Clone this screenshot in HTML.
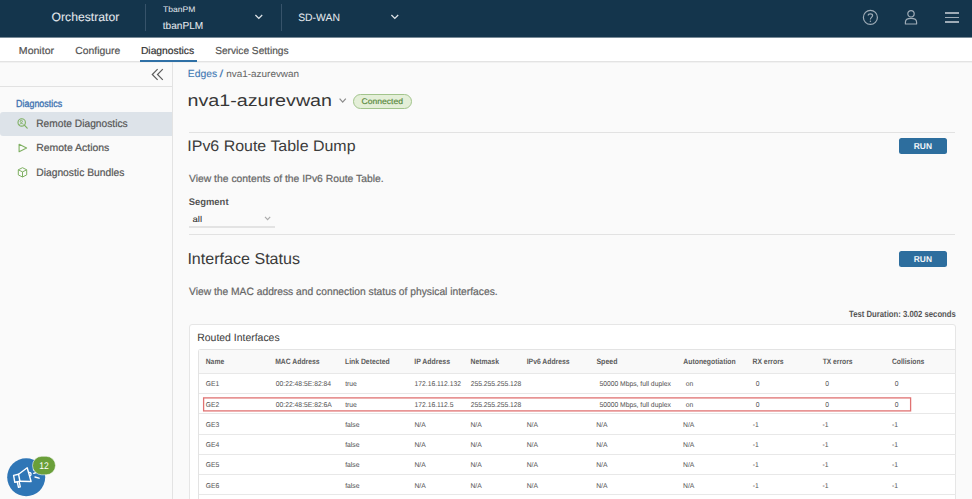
<!DOCTYPE html>
<html><head><meta charset="utf-8">
<style>
*{margin:0;padding:0;box-sizing:border-box}
html,body{width:972px;height:499px;overflow:hidden;background:#fafafa;font-family:"Liberation Sans",sans-serif;position:relative}
.a{position:absolute}
.t{position:absolute;white-space:nowrap;line-height:1;transform-origin:0 0;text-rendering:geometricPrecision;-webkit-text-stroke:0.2px currentColor}
.hr{position:absolute;height:1px;background:#e2e2e2}
.btn{position:absolute;width:48.3px;height:16.4px;background:#2d6e9e;border-radius:2.5px}
.rl{position:absolute;left:199px;width:757px;height:1px;background:#e8e8e8}
</style></head><body>
<div class="a" style="left:0;top:0;width:972px;height:37px;background:#14354c"></div>
<div class="a" style="left:145px;top:4px;width:1px;height:27px;background:#37536a"></div>
<svg class="a" style="left:254px;top:13px" width="10" height="8"><path d="M1.4 2 L4.8 5.4 L8.2 2" stroke="#dfe4e8" stroke-width="1.3" fill="none"/></svg>
<div class="a" style="left:281px;top:4px;width:1px;height:27px;background:#37536a"></div>
<svg class="a" style="left:390px;top:13px" width="10" height="8"><path d="M1.4 2 L4.8 5.4 L8.2 2" stroke="#dfe4e8" stroke-width="1.3" fill="none"/></svg>
<svg class="a" style="left:862px;top:9px" width="17" height="17"><circle cx="8.4" cy="8.4" r="7" stroke="#9eabb6" stroke-width="1.2" fill="none"/><path d="M6.2 6.6 C6.2 4.2 10.6 4.2 10.6 6.6 C10.6 8.3 8.4 8.4 8.4 10.4" stroke="#9eabb6" stroke-width="1.2" fill="none"/><circle cx="8.4" cy="12.3" r="0.7" fill="#9eabb6"/></svg>
<svg class="a" style="left:903px;top:9px" width="16" height="17"><circle cx="8" cy="4.8" r="3.2" stroke="#9eabb6" stroke-width="1.2" fill="none"/><path d="M2.4 15 L2.4 13.2 C2.4 10.4 5 9.4 8 9.4 C11 9.4 13.6 10.4 13.6 13.2 L13.6 15 Z" stroke="#9eabb6" stroke-width="1.2" fill="none" stroke-linejoin="round"/></svg>
<div class="a" style="left:945px;top:12px;width:13.5px;height:1.5px;background:#9eabb6"></div>
<div class="a" style="left:945px;top:16.5px;width:13.5px;height:1.5px;background:#9eabb6"></div>
<div class="a" style="left:945px;top:21px;width:13.5px;height:1.5px;background:#9eabb6"></div>

<div class="a" style="left:0;top:37px;width:972px;height:24px;background:#fff"></div>
<div class="a" style="left:0;top:61px;width:972px;height:1px;background:#e3e3e3"></div>
<div class="a" style="left:0;top:62px;width:972px;height:1px;background:#f1f1f1"></div>
<div class="a" style="left:0;top:37px;width:972px;height:1px;background:#788a97"></div>
<div class="a" style="left:139.5px;top:59.5px;width:57px;height:2px;background:#2f70a6"></div>

<div class="a" style="left:172px;top:62px;width:1px;height:437px;background:#e3e3e3"></div>
<svg class="a" style="left:151px;top:68px" width="14" height="13"><path d="M6.6 1.2 L1.3 6.5 L6.6 11.8 M11.8 1.2 L6.5 6.5 L11.8 11.8" stroke="#5c5c5c" stroke-width="1.2" fill="none"/></svg>
<div class="hr" style="left:0;top:86px;width:172px"></div>
<div class="a" style="left:0;top:111.5px;width:172px;height:24px;background:#dde3e9;border-radius:3px 0 0 3px"></div>
<svg class="a" style="left:16px;top:116px" width="14" height="14"><circle cx="5.7" cy="6.4" r="3.7" stroke="#7fb062" stroke-width="1.1" fill="none"/><circle cx="5.3" cy="5.4" r="1.1" stroke="#7fb062" stroke-width="0.9" fill="none"/><path d="M3.4 8.6 C4.2 7.2 6.6 7.2 7.6 8.4" stroke="#7fb062" stroke-width="0.9" fill="none"/><path d="M8.6 9.4 L11.2 12.1" stroke="#7fb062" stroke-width="1.2" stroke-linecap="round" fill="none"/></svg>
<svg class="a" style="left:18px;top:143px" width="10" height="10"><path d="M1.1 1.2 L8.6 5 L1.1 8.8 Z" stroke="#7fb062" stroke-width="1.1" fill="none" stroke-linejoin="round"/></svg>
<svg class="a" style="left:17px;top:167px" width="12" height="12"><path d="M5.5 0.7 L9.7 2.8 L9.7 7.9 L5.5 10 L1.3 7.9 L1.3 2.8 Z M1.3 2.8 L5.5 4.9 L9.7 2.8 M5.5 4.9 L5.5 10" stroke="#7fb062" stroke-width="1" fill="none" stroke-linejoin="round"/></svg>

<svg class="a" style="left:338px;top:97px" width="10" height="8"><path d="M1.6 1.6 L4.7 5.1 L7.8 1.6" stroke="#8a8a8a" stroke-width="1.2" fill="none"/></svg>
<div class="a" style="left:353px;top:94px;width:59px;height:15px;border:1px solid #a2c48c;background:#e4efd8;border-radius:8px"></div>

<div class="hr" style="left:189px;top:132px;width:766px"></div>
<div class="btn" style="left:899px;top:137.5px"></div>
<svg class="a" style="left:264px;top:215px" width="8" height="7"><path d="M1 1.8 L3.6 4.7 L6.2 1.8" stroke="#ababab" stroke-width="1.15" fill="none"/></svg>
<div class="a" style="left:189px;top:226px;width:86px;height:2px;background:#e3e3e3"></div>
<div class="hr" style="left:189px;top:233.5px;width:766px"></div>
<div class="btn" style="left:899px;top:250.5px"></div>

<div class="a" style="left:189px;top:324px;width:767px;height:200px;background:#fff;border:1px solid #e6e6e6;border-radius:3px"></div>
<div class="a" style="left:198px;top:349px;width:757px;height:160px;background:#fff;border:1px solid #e3e3e3;border-right:0;border-radius:3px 0 0 0"></div>
<div class="a" style="left:199px;top:350px;width:756px;height:23px;background:#f9f9f9"></div>
<div class="a" style="left:955px;top:330px;width:1px;height:169px;background:#e6e6e6"></div>
<div class="rl" style="top:373px"></div>
<div class="rl" style="top:393px"></div>
<div class="rl" style="top:413px"></div>
<div class="rl" style="top:433.5px"></div>
<div class="rl" style="top:454px"></div>
<div class="rl" style="top:474px"></div>
<div class="rl" style="top:494px"></div>
<svg class="a" style="left:200px;top:394px" width="715" height="20"><rect x="3.6" y="3.9" width="707" height="13" fill="none" stroke="#e07272" stroke-width="1.3"/></svg>

<svg class="a" style="left:0;top:450px" width="60" height="49">
<circle cx="26.2" cy="27.2" r="19" fill="#2f76b6"/>
<g fill="none" stroke="#fff" stroke-width="1.4" stroke-linejoin="round" stroke-linecap="round">
<path d="M13.6 25.4 L18.6 24.3 L19.9 31.2 L14.8 32.3 Z"/>
<path d="M18.6 24.3 L27.2 17.8 L31.1 31.5 L19.9 31.2"/>
<path d="M29.2 22.6 C31 22 31.8 25.2 30.1 25.8"/>
<path d="M17.3 32.1 L18.5 37.3 L20.3 36.9 L19.2 31.8"/>
<path d="M33.8 23.4 L36.2 22.5 M35 27 L39 28.2 M33.5 19.8 L34.5 20.2"/>
</g>
<rect x="32.5" y="6.3" width="23" height="18.5" rx="9.25" fill="#6a9f3a" stroke="#f4f7f4" stroke-width="0.6"/>
</svg>
<div class="t" style="left:51px;top:11px;font-size:12.06px;color:#e4e9ee;-webkit-text-stroke:0.05px currentColor;transform:translateX(0.492px) scaleX(1.0125);">Orchestrator</div>
<div class="t" style="left:163px;top:6px;font-size:8.09px;color:#e4e9ee;-webkit-text-stroke:0.02px currentColor;transform:translateX(0.056px) scaleX(1.0548);">TbanPM</div>
<div class="t" style="left:162px;top:22px;font-size:10.15px;color:#e4e9ee;-webkit-text-stroke:0.05px currentColor;transform:translateX(0.760px) scaleX(0.9981);">tbanPLM</div>
<div class="t" style="left:298px;top:13px;font-size:10.59px;color:#e4e9ee;-webkit-text-stroke:0.05px currentColor;transform:translateX(0.203px) scaleX(0.9802);">SD-WAN</div>
<div class="t" style="left:18px;top:47px;font-size:10.15px;color:#555;transform:translateX(0.839px) scaleX(1.0426);">Monitor</div>
<div class="t" style="left:75px;top:47px;font-size:10.15px;color:#555;transform:translateX(0.298px) scaleX(1.0240);">Configure</div>
<div class="t" style="left:140px;top:47px;font-size:10.15px;color:#333;transform:translateX(0.913px) scaleX(1.0176);">Diagnostics</div>
<div class="t" style="left:215px;top:47px;font-size:10.15px;color:#555;transform:translateX(0.204px) scaleX(1.0023);">Service Settings</div>
<div class="t" style="left:16px;top:100px;font-size:10.15px;color:#3f74b2;-webkit-text-stroke:0.35px currentColor;transform:translateX(0.107px) scaleX(0.8793);">Diagnostics</div>
<div class="t" style="left:36px;top:119px;font-size:10.59px;color:#555;transform:translateX(0.242px) scaleX(0.9652);">Remote Diagnostics</div>
<div class="t" style="left:36px;top:144px;font-size:10.29px;color:#555;transform:translateX(0.235px) scaleX(1.0153);">Remote Actions</div>
<div class="t" style="left:36px;top:168px;font-size:10.59px;color:#555;transform:translateX(0.240px) scaleX(0.9725);">Diagnostic Bundles</div>
<div class="t" style="left:187px;top:70px;font-size:10.29px;color:#3f78b3;-webkit-text-stroke:0.1px currentColor;transform:translateX(0.712px) scaleX(1.0091);">Edges</div>
<div class="t" style="left:219px;top:70px;font-size:10.29px;color:#3f78b3;-webkit-text-stroke:0.1px currentColor;transform:translateX(0.575px) scaleX(1.2918);">/</div>
<div class="t" style="left:226px;top:70px;font-size:9.56px;color:#666;-webkit-text-stroke:0.05px currentColor;transform:translateX(0.259px) scaleX(1.0393);">nva1-azurevwan</div>
<div class="t" style="left:187px;top:93px;font-size:16.62px;color:#363636;-webkit-text-stroke:0;transform:translateX(0.444px) scaleX(1.1864);">nva1-azurevwan</div>
<div class="t" style="left:361px;top:98px;font-size:8.09px;color:#5a8a40;-webkit-text-stroke:0.18px currentColor;transform:translateX(0.434px) scaleX(1.0659);">Connected</div>
<div class="t" style="left:187px;top:139px;font-size:15.29px;color:#3c3c3c;-webkit-text-stroke:0;transform:translateX(0.301px) scaleX(1.0442);">IPv6 Route Table Dump</div>
<div class="t" style="left:913px;top:142px;font-size:8.53px;color:#f4f7fa;font-weight:bold;-webkit-text-stroke:0;transform:translateX(0.794px) scaleX(0.9824);">RUN</div>
<div class="t" style="left:188px;top:175px;font-size:10.29px;color:#666;transform:translateX(0.996px) scaleX(1.0066);">View the contents of the IPv6 Route Table.</div>
<div class="t" style="left:188px;top:198px;font-size:9.56px;color:#555;font-weight:bold;-webkit-text-stroke:0;transform:translateX(0.647px) scaleX(0.9893);">Segment</div>
<div class="t" style="left:192px;top:215px;font-size:8.53px;color:#333;-webkit-text-stroke:0.08px currentColor;transform:translateX(0.516px) scaleX(1.1157);">all</div>
<div class="t" style="left:187px;top:252px;font-size:15.88px;color:#3c3c3c;-webkit-text-stroke:0;transform:translateX(0.400px) scaleX(1.0127);">Interface Status</div>
<div class="t" style="left:913px;top:255px;font-size:8.53px;color:#f4f7fa;font-weight:bold;-webkit-text-stroke:0;transform:translateX(0.794px) scaleX(0.9824);">RUN</div>
<div class="t" style="left:188px;top:287px;font-size:10.59px;color:#666;transform:translateX(0.995px) scaleX(0.9708);">View the MAC address and connection status of physical interfaces.</div>
<div class="t" style="left:848px;top:310px;font-size:8.97px;color:#555;font-weight:bold;-webkit-text-stroke:0;transform:translateX(0.991px) scaleX(0.8623);">Test Duration: 3.002 seconds</div>
<div class="t" style="left:197px;top:333px;font-size:10.59px;color:#404040;-webkit-text-stroke:0.05px currentColor;transform:translateX(0.240px) scaleX(0.9867);">Routed Interfaces</div>
<div class="t" style="left:205px;top:358px;font-size:7.79px;color:#5c5c5c;font-weight:bold;-webkit-text-stroke:0;transform:translateX(0.704px) scaleX(0.8745);">Name</div>
<div class="t" style="left:275px;top:358px;font-size:7.79px;color:#5c5c5c;font-weight:bold;-webkit-text-stroke:0;transform:translateX(0.202px) scaleX(0.8752);">MAC Address</div>
<div class="t" style="left:345px;top:358px;font-size:7.79px;color:#5c5c5c;font-weight:bold;-webkit-text-stroke:0;transform:translateX(0.006px) scaleX(0.8764);">Link Detected</div>
<div class="t" style="left:414px;top:358px;font-size:7.79px;color:#5c5c5c;font-weight:bold;-webkit-text-stroke:0;transform:translateX(0.302px) scaleX(0.8887);">IP Address</div>
<div class="t" style="left:470px;top:358px;font-size:7.79px;color:#5c5c5c;font-weight:bold;-webkit-text-stroke:0;transform:translateX(0.504px) scaleX(0.8770);">Netmask</div>
<div class="t" style="left:526px;top:358px;font-size:7.79px;color:#5c5c5c;font-weight:bold;-webkit-text-stroke:0;transform:translateX(0.703px) scaleX(0.8745);">IPv6 Address</div>
<div class="t" style="left:596px;top:358px;font-size:7.79px;color:#5c5c5c;font-weight:bold;-webkit-text-stroke:0;transform:translateX(0.454px) scaleX(0.8997);">Speed</div>
<div class="t" style="left:39px;top:462px;font-size:9.71px;color:#fff;-webkit-text-stroke:0.0px currentColor;transform:translateX(0.294px) scaleX(0.8850);">12</div>
<div class="t" style="left:683px;top:358px;font-size:7.79px;color:#5c5c5c;font-weight:bold;-webkit-text-stroke:0;transform:translateX(0.358px) scaleX(0.8766);">Autonegotiation</div>
<div class="t" style="left:752px;top:358px;font-size:7.79px;color:#5c5c5c;font-weight:bold;-webkit-text-stroke:0;transform:translateX(0.504px) scaleX(0.8764);">RX errors</div>
<div class="t" style="left:822px;top:358px;font-size:7.79px;color:#5c5c5c;font-weight:bold;-webkit-text-stroke:0;transform:translateX(0.667px) scaleX(0.8638);">TX errors</div>
<div class="t" style="left:891px;top:358px;font-size:7.79px;color:#5c5c5c;font-weight:bold;-webkit-text-stroke:0;transform:translateX(0.922px) scaleX(0.8715);">Collisions</div>
<div class="t" style="left:205px;top:381px;font-size:7.0px;color:#5a5a5a;-webkit-text-stroke:0.05px currentColor;transform:translateX(0.860px) scaleX(0.9650);">GE1</div>
<div class="t" style="left:275px;top:381px;font-size:7.0px;color:#5a5a5a;-webkit-text-stroke:0.05px currentColor;transform:translateX(0.836px) scaleX(0.9650);">00:22:48:5E:82:84</div>
<div class="t" style="left:345px;top:381px;font-size:7.0px;color:#5a5a5a;-webkit-text-stroke:0.05px currentColor;transform:translateX(0.198px) scaleX(0.9650);">true</div>
<div class="t" style="left:414px;top:381px;font-size:7.0px;color:#5a5a5a;-webkit-text-stroke:0.05px currentColor;transform:translateX(0.485px) scaleX(0.9650);">172.16.112.132</div>
<div class="t" style="left:470px;top:381px;font-size:7.0px;color:#5a5a5a;-webkit-text-stroke:0.05px currentColor;transform:translateX(0.660px) scaleX(0.9650);">255.255.255.128</div>
<div class="t" style="left:599px;top:381px;font-size:7.0px;color:#5a5a5a;-webkit-text-stroke:0.05px currentColor;transform:translateX(0.430px) scaleX(0.9650);">50000 Mbps, full duplex</div>
<div class="t" style="left:685px;top:381px;font-size:7.0px;color:#5a5a5a;-webkit-text-stroke:0.05px currentColor;transform:translateX(0.816px) scaleX(0.9650);">on</div>
<div class="t" style="left:755px;top:381px;font-size:7.0px;color:#5a5a5a;-webkit-text-stroke:0.05px currentColor;transform:translateX(0.736px) scaleX(0.9650);">0</div>
<div class="t" style="left:825px;top:381px;font-size:7.0px;color:#5a5a5a;-webkit-text-stroke:0.05px currentColor;transform:translateX(0.236px) scaleX(0.9650);">0</div>
<div class="t" style="left:894px;top:381px;font-size:7.0px;color:#5a5a5a;-webkit-text-stroke:0.05px currentColor;transform:translateX(0.736px) scaleX(0.9650);">0</div>
<div class="t" style="left:205px;top:402px;font-size:7.0px;color:#5a5a5a;-webkit-text-stroke:0.05px currentColor;transform:translateX(0.860px) scaleX(0.9650);">GE2</div>
<div class="t" style="left:275px;top:402px;font-size:7.0px;color:#5a5a5a;-webkit-text-stroke:0.05px currentColor;transform:translateX(0.836px) scaleX(0.9650);">00:22:48:5E:82:6A</div>
<div class="t" style="left:345px;top:402px;font-size:7.0px;color:#5a5a5a;-webkit-text-stroke:0.05px currentColor;transform:translateX(0.198px) scaleX(0.9650);">true</div>
<div class="t" style="left:414px;top:402px;font-size:7.0px;color:#5a5a5a;-webkit-text-stroke:0.05px currentColor;transform:translateX(0.485px) scaleX(0.9650);">172.16.112.5</div>
<div class="t" style="left:470px;top:402px;font-size:7.0px;color:#5a5a5a;-webkit-text-stroke:0.05px currentColor;transform:translateX(0.660px) scaleX(0.9650);">255.255.255.128</div>
<div class="t" style="left:599px;top:402px;font-size:7.0px;color:#5a5a5a;-webkit-text-stroke:0.05px currentColor;transform:translateX(0.430px) scaleX(0.9650);">50000 Mbps, full duplex</div>
<div class="t" style="left:685px;top:402px;font-size:7.0px;color:#5a5a5a;-webkit-text-stroke:0.05px currentColor;transform:translateX(0.816px) scaleX(0.9650);">on</div>
<div class="t" style="left:755px;top:402px;font-size:7.0px;color:#5a5a5a;-webkit-text-stroke:0.05px currentColor;transform:translateX(0.736px) scaleX(0.9650);">0</div>
<div class="t" style="left:825px;top:402px;font-size:7.0px;color:#5a5a5a;-webkit-text-stroke:0.05px currentColor;transform:translateX(0.236px) scaleX(0.9650);">0</div>
<div class="t" style="left:894px;top:402px;font-size:7.0px;color:#5a5a5a;-webkit-text-stroke:0.05px currentColor;transform:translateX(0.736px) scaleX(0.9650);">0</div>
<div class="t" style="left:205px;top:422px;font-size:7.0px;color:#5a5a5a;-webkit-text-stroke:0.05px currentColor;transform:translateX(0.860px) scaleX(0.9650);">GE3</div>
<div class="t" style="left:345px;top:422px;font-size:7.0px;color:#5a5a5a;-webkit-text-stroke:0.05px currentColor;transform:translateX(0.204px) scaleX(0.9650);">false</div>
<div class="t" style="left:414px;top:422px;font-size:7.0px;color:#5a5a5a;-webkit-text-stroke:0.05px currentColor;transform:translateX(0.446px) scaleX(0.9650);">N/A</div>
<div class="t" style="left:470px;top:422px;font-size:7.0px;color:#5a5a5a;-webkit-text-stroke:0.05px currentColor;transform:translateX(0.446px) scaleX(0.9650);">N/A</div>
<div class="t" style="left:526px;top:422px;font-size:7.0px;color:#5a5a5a;-webkit-text-stroke:0.05px currentColor;transform:translateX(0.646px) scaleX(0.9650);">N/A</div>
<div class="t" style="left:596px;top:422px;font-size:7.0px;color:#5a5a5a;-webkit-text-stroke:0.05px currentColor;transform:translateX(0.146px) scaleX(0.9650);">N/A</div>
<div class="t" style="left:683px;top:422px;font-size:7.0px;color:#5a5a5a;-webkit-text-stroke:0.05px currentColor;transform:translateX(0.046px) scaleX(0.9650);">N/A</div>
<div class="t" style="left:752px;top:422px;font-size:7.0px;color:#5a5a5a;-webkit-text-stroke:0.05px currentColor;transform:translateX(0.700px) scaleX(0.9650);">-1</div>
<div class="t" style="left:822px;top:422px;font-size:7.0px;color:#5a5a5a;-webkit-text-stroke:0.05px currentColor;transform:translateX(0.600px) scaleX(0.9650);">-1</div>
<div class="t" style="left:892px;top:422px;font-size:7.0px;color:#5a5a5a;-webkit-text-stroke:0.05px currentColor;transform:translateX(0.100px) scaleX(0.9650);">-1</div>
<div class="t" style="left:205px;top:442px;font-size:7.0px;color:#5a5a5a;-webkit-text-stroke:0.05px currentColor;transform:translateX(0.860px) scaleX(0.9650);">GE4</div>
<div class="t" style="left:345px;top:442px;font-size:7.0px;color:#5a5a5a;-webkit-text-stroke:0.05px currentColor;transform:translateX(0.204px) scaleX(0.9650);">false</div>
<div class="t" style="left:414px;top:442px;font-size:7.0px;color:#5a5a5a;-webkit-text-stroke:0.05px currentColor;transform:translateX(0.446px) scaleX(0.9650);">N/A</div>
<div class="t" style="left:470px;top:442px;font-size:7.0px;color:#5a5a5a;-webkit-text-stroke:0.05px currentColor;transform:translateX(0.446px) scaleX(0.9650);">N/A</div>
<div class="t" style="left:526px;top:442px;font-size:7.0px;color:#5a5a5a;-webkit-text-stroke:0.05px currentColor;transform:translateX(0.646px) scaleX(0.9650);">N/A</div>
<div class="t" style="left:596px;top:442px;font-size:7.0px;color:#5a5a5a;-webkit-text-stroke:0.05px currentColor;transform:translateX(0.146px) scaleX(0.9650);">N/A</div>
<div class="t" style="left:683px;top:442px;font-size:7.0px;color:#5a5a5a;-webkit-text-stroke:0.05px currentColor;transform:translateX(0.046px) scaleX(0.9650);">N/A</div>
<div class="t" style="left:752px;top:442px;font-size:7.0px;color:#5a5a5a;-webkit-text-stroke:0.05px currentColor;transform:translateX(0.700px) scaleX(0.9650);">-1</div>
<div class="t" style="left:822px;top:442px;font-size:7.0px;color:#5a5a5a;-webkit-text-stroke:0.05px currentColor;transform:translateX(0.600px) scaleX(0.9650);">-1</div>
<div class="t" style="left:892px;top:442px;font-size:7.0px;color:#5a5a5a;-webkit-text-stroke:0.05px currentColor;transform:translateX(0.100px) scaleX(0.9650);">-1</div>
<div class="t" style="left:205px;top:462px;font-size:7.0px;color:#5a5a5a;-webkit-text-stroke:0.05px currentColor;transform:translateX(0.860px) scaleX(0.9650);">GE5</div>
<div class="t" style="left:345px;top:462px;font-size:7.0px;color:#5a5a5a;-webkit-text-stroke:0.05px currentColor;transform:translateX(0.204px) scaleX(0.9650);">false</div>
<div class="t" style="left:414px;top:462px;font-size:7.0px;color:#5a5a5a;-webkit-text-stroke:0.05px currentColor;transform:translateX(0.446px) scaleX(0.9650);">N/A</div>
<div class="t" style="left:470px;top:462px;font-size:7.0px;color:#5a5a5a;-webkit-text-stroke:0.05px currentColor;transform:translateX(0.446px) scaleX(0.9650);">N/A</div>
<div class="t" style="left:526px;top:462px;font-size:7.0px;color:#5a5a5a;-webkit-text-stroke:0.05px currentColor;transform:translateX(0.646px) scaleX(0.9650);">N/A</div>
<div class="t" style="left:596px;top:462px;font-size:7.0px;color:#5a5a5a;-webkit-text-stroke:0.05px currentColor;transform:translateX(0.146px) scaleX(0.9650);">N/A</div>
<div class="t" style="left:683px;top:462px;font-size:7.0px;color:#5a5a5a;-webkit-text-stroke:0.05px currentColor;transform:translateX(0.046px) scaleX(0.9650);">N/A</div>
<div class="t" style="left:752px;top:462px;font-size:7.0px;color:#5a5a5a;-webkit-text-stroke:0.05px currentColor;transform:translateX(0.700px) scaleX(0.9650);">-1</div>
<div class="t" style="left:822px;top:462px;font-size:7.0px;color:#5a5a5a;-webkit-text-stroke:0.05px currentColor;transform:translateX(0.600px) scaleX(0.9650);">-1</div>
<div class="t" style="left:892px;top:462px;font-size:7.0px;color:#5a5a5a;-webkit-text-stroke:0.05px currentColor;transform:translateX(0.100px) scaleX(0.9650);">-1</div>
<div class="t" style="left:205px;top:483px;font-size:7.0px;color:#5a5a5a;-webkit-text-stroke:0.05px currentColor;transform:translateX(0.860px) scaleX(0.9650);">GE6</div>
<div class="t" style="left:345px;top:483px;font-size:7.0px;color:#5a5a5a;-webkit-text-stroke:0.05px currentColor;transform:translateX(0.204px) scaleX(0.9650);">false</div>
<div class="t" style="left:414px;top:483px;font-size:7.0px;color:#5a5a5a;-webkit-text-stroke:0.05px currentColor;transform:translateX(0.446px) scaleX(0.9650);">N/A</div>
<div class="t" style="left:470px;top:483px;font-size:7.0px;color:#5a5a5a;-webkit-text-stroke:0.05px currentColor;transform:translateX(0.446px) scaleX(0.9650);">N/A</div>
<div class="t" style="left:526px;top:483px;font-size:7.0px;color:#5a5a5a;-webkit-text-stroke:0.05px currentColor;transform:translateX(0.646px) scaleX(0.9650);">N/A</div>
<div class="t" style="left:596px;top:483px;font-size:7.0px;color:#5a5a5a;-webkit-text-stroke:0.05px currentColor;transform:translateX(0.146px) scaleX(0.9650);">N/A</div>
<div class="t" style="left:683px;top:483px;font-size:7.0px;color:#5a5a5a;-webkit-text-stroke:0.05px currentColor;transform:translateX(0.046px) scaleX(0.9650);">N/A</div>
<div class="t" style="left:752px;top:483px;font-size:7.0px;color:#5a5a5a;-webkit-text-stroke:0.05px currentColor;transform:translateX(0.700px) scaleX(0.9650);">-1</div>
<div class="t" style="left:822px;top:483px;font-size:7.0px;color:#5a5a5a;-webkit-text-stroke:0.05px currentColor;transform:translateX(0.600px) scaleX(0.9650);">-1</div>
<div class="t" style="left:892px;top:483px;font-size:7.0px;color:#5a5a5a;-webkit-text-stroke:0.05px currentColor;transform:translateX(0.100px) scaleX(0.9650);">-1</div>
</body></html>
